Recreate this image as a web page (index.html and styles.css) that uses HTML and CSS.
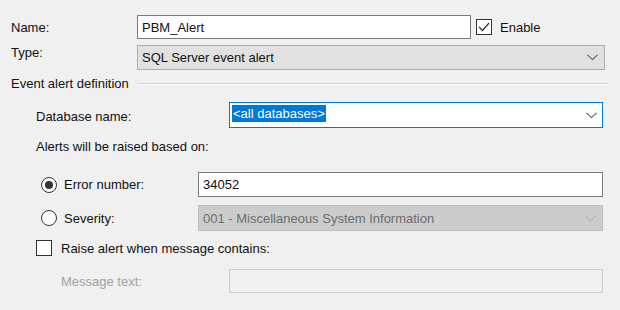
FILE: index.html
```html
<!DOCTYPE html>
<html>
<head>
<meta charset="utf-8">
<link rel="stylesheet" href="styles.css">
</head>
<body>
<div class="dialog">
  <div class="row r-name">
    <span class="lbl w-top">Name:</span>
    <div class="box text name-box"><span class="val">PBM_Alert</span></div>
    <span class="chk checked">
      <svg width="14" height="14" viewBox="0 0 14 14"><polyline points="2,7 5.5,10.5 12,3" fill="none" stroke="#333" stroke-width="1.2"/></svg>
    </span>
    <span class="chk-lbl">Enable</span>
  </div>
  <div class="row r-type">
    <span class="lbl w-top top">Type:</span>
    <div class="box combo type-box"><span class="val">SQL Server event alert</span>
      <svg class="chev" width="11" height="7" viewBox="0 0 11 7"><polyline points="0.5,0.8 5.5,5.6 10.5,0.8" fill="none" stroke="#5a5a5a" stroke-width="1.1"/></svg>
    </div>
  </div>
  <div class="row r-group">
    <span class="lbl">Event alert definition</span>
    <span class="gline"></span>
  </div>
  <div class="row r-db">
    <span class="lbl w-db top">Database name:</span>
    <div class="box db-box"><span class="sel">&lt;all databases&gt;</span>
      <svg class="chev" width="11" height="7" viewBox="0 0 11 7"><polyline points="0.5,0.8 5.5,5.6 10.5,0.8" fill="none" stroke="#5a5a5a" stroke-width="1.1"/></svg>
    </div>
  </div>
  <div class="row r-alerts">
    <span class="lbl">Alerts will be raised based on:</span>
  </div>
  <div class="row r-err">
    <span class="radio on"><span class="dot"></span></span>
    <span class="lbl w-radio">Error number:</span>
    <div class="box text wide-box"><span class="val">34052</span></div>
  </div>
  <div class="row r-sev">
    <span class="radio"></span>
    <span class="lbl w-radio">Severity:</span>
    <div class="box combo disabled wide-box"><span class="val">001 - Miscellaneous System Information</span>
      <svg class="chev" width="11" height="7" viewBox="0 0 11 7"><polyline points="0.5,0.8 5.5,5.6 10.5,0.8" fill="none" stroke="#b4b4b4" stroke-width="1.1"/></svg>
    </div>
  </div>
  <div class="row r-raise">
    <span class="chk"></span>
    <span class="chk-lbl raise-lbl">Raise alert when message contains:</span>
  </div>
  <div class="row r-msg">
    <span class="lbl w-msg muted">Message text:</span>
    <div class="box text-off db-width"></div>
  </div>
</div>
</body>
</html>
```

FILE: styles.css
```css
* { box-sizing: border-box; }
html, body { margin: 0; padding: 0; }
body {
  background: #f0f0f0;
  font-family: "Liberation Sans", Arial, sans-serif;
  font-size: 13px;
  color: #111;
  width: 620px;
  height: 310px;
  overflow: hidden;
}
.dialog { padding: 0 0 0 11px; }
.row { display: flex; align-items: center; }
.lbl { line-height: 15px; white-space: nowrap; }
.top { align-self: flex-start; }

.r-name { margin-top: 15px; height: 24px; }
.w-top { width: 126px; }
.box {
  display: flex;
  align-items: center;
  height: 100%;
  background: #fff;
  border: 1px solid #7a7a7a;
  white-space: nowrap;
  overflow: hidden;
}
.val { line-height: 15px; }
.text .val { padding-left: 4px; }
.name-box { width: 334px; padding-left: 0; }
.chk {
  width: 16px; height: 16px;
  border: 1px solid #333;
  background: #fff;
  display: flex; align-items: center; justify-content: center;
  flex: none;
}
.r-name .chk { margin-left: 5px; }
.chk-lbl { margin-left: 8px; line-height: 15px; }

.r-type { margin-top: 6px; height: 25px; }
.combo { background: #e1e1e1; border-color: #adadad; justify-content: space-between; }
.combo .val { padding-left: 4px; }
.chev { margin-right: 6px; flex: none; }
.type-box { width: 468px; }

.r-group { margin-top: 6px; height: 15px; }
.gline {
  flex: 1;
  margin-left: 9px;
  margin-right: 12px;
  height: 2px;
  border-top: 1px solid #d2d2d2;
  border-bottom: 1px solid #ffffff;
  margin-top: 1px;
}

.r-db { margin-top: 11px; height: 26px; margin-left: 25px; }
.w-db { width: 193px; margin-top: 7px; }
.db-box { width: 374px; border-color: #0078d7; justify-content: space-between; padding-left: 2px; }
.sel {
  background: #0078d7;
  color: #fff;
  line-height: 17px;
  padding: 0 1px;
  margin-top: -3px;
}
.db-box .chev { margin-right: 5px; }

.r-alerts { margin-top: 11px; height: 15px; margin-left: 25px; }

.r-err { margin-top: 18px; height: 25px; margin-left: 30px; }
.radio {
  width: 16px; height: 16px;
  border: 1px solid #333;
  border-radius: 50%;
  background: #fff;
  display: flex; align-items: center; justify-content: center;
  flex: none;
}
.dot { width: 8px; height: 8px; border-radius: 50%; background: #333; }
.w-radio { margin-left: 7px; width: 134px; }
.wide-box { width: 405px; }
.wide-box .val { padding-left: 4px; }

.r-sev { margin-top: 8px; height: 26px; margin-left: 30px; }
.disabled { background: #cccccc; border-color: #bfbfbf; color: #6d6d6d; }

.r-raise { margin-top: 9px; height: 16px; margin-left: 25px; }
.raise-lbl { margin-left: 9px; }

.r-msg { margin-top: 13px; height: 24px; margin-left: 50px; }
.w-msg { width: 168px; }
.muted { color: #a0a0a0; }
.text-off { background: #f0f0f0; border-color: #cccccc; }
.db-width { width: 374px; }
```
